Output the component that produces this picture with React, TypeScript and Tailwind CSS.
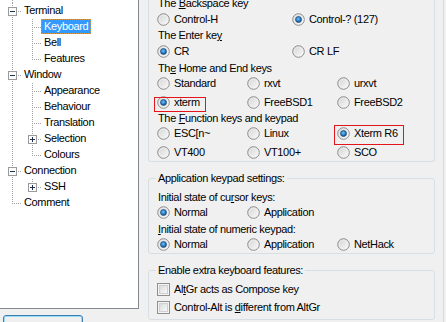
import { useId } from "react";

type Conn = "pipe" | "tee" | "ell";
type Box = "plus" | "minus";

interface TreeRow {
  cells: Array<{ t: Conn; box?: Box }>;
  label: string;
  selected?: boolean;
}

const tree: TreeRow[] = [
  { cells: [{ t: "tee", box: "minus" }], label: "Terminal" },
  { cells: [{ t: "pipe" }, { t: "tee" }], label: "Keyboard", selected: true },
  { cells: [{ t: "pipe" }, { t: "tee" }], label: "Bell" },
  { cells: [{ t: "pipe" }, { t: "ell" }], label: "Features" },
  { cells: [{ t: "tee", box: "minus" }], label: "Window" },
  { cells: [{ t: "pipe" }, { t: "tee" }], label: "Appearance" },
  { cells: [{ t: "pipe" }, { t: "tee" }], label: "Behaviour" },
  { cells: [{ t: "pipe" }, { t: "tee" }], label: "Translation" },
  { cells: [{ t: "pipe" }, { t: "tee", box: "plus" }], label: "Selection" },
  { cells: [{ t: "pipe" }, { t: "ell" }], label: "Colours" },
  { cells: [{ t: "tee", box: "minus" }], label: "Connection" },
  { cells: [{ t: "pipe" }, { t: "ell", box: "plus" }], label: "SSH" },
  { cells: [{ t: "ell" }], label: "Comment" },
];

function Cell({ t, box, h = 16 }: { t: Conn; box?: Box; h?: number }) {
  const dot = { stroke: "#a0a0a0", strokeDasharray: "1 1", shapeRendering: "crispEdges" as const };
  return (
    <svg width="20" height={h} className="shrink-0">
      {(t === "pipe" || t === "tee") && <line x1="10.5" y1="0" x2="10.5" y2={h} {...dot} />}
      {t === "ell" && <line x1="10.5" y1="0" x2="10.5" y2="9" {...dot} />}
      {(t === "tee" || t === "ell") && <line x1="12" y1="8.5" x2="20" y2="8.5" {...dot} />}
      {box && (
        <g shapeRendering="crispEdges">
          <rect x="6.5" y="4.5" width="8" height="8" fill="#fdfdfd" stroke="#9a9a9a" />
          <line x1="8" y1="8.5" x2="13" y2="8.5" stroke="#1f2f4f" />
          {box === "plus" && <line x1="10.5" y1="6" x2="10.5" y2="11" stroke="#1f2f4f" />}
        </g>
      )}
    </svg>
  );
}

function Radio({ checked }: { checked?: boolean }) {
  const id = useId().replace(/:/g, "");
  return (
    <svg width="13" height="13" viewBox="0 0 13 13" className="shrink-0">
      <defs>
        <linearGradient id={`f${id}`} x1="0" y1="0" x2="1" y2="1">
          <stop offset="0" stopColor="#d2d2d2" />
          <stop offset="1" stopColor="#fcfcfc" />
        </linearGradient>
        <radialGradient id={`d${id}`} cx="0.45" cy="0.4" r="0.6">
          <stop offset="0" stopColor="#6cc2f5" />
          <stop offset="0.6" stopColor="#2a7fc8" />
          <stop offset="1" stopColor="#0f426e" />
        </radialGradient>
      </defs>
      <circle cx="6.5" cy="6.5" r="5.8" fill={`url(#f${id})`} stroke="#8d8d8d" strokeWidth="1" />
      <circle cx="6.5" cy="6.5" r="4.3" fill="none" stroke="#f4f4f4" strokeWidth="0.6" />
      {checked && <circle cx="6.5" cy="6.5" r="3" fill={`url(#d${id})`} stroke="#1b4f7e" strokeWidth="0.7" />}
    </svg>
  );
}

function Check() {
  const id = useId().replace(/:/g, "");
  return (
    <svg width="13" height="13" viewBox="0 0 13 13" className="shrink-0" shapeRendering="crispEdges">
      <defs>
        <linearGradient id={`c${id}`} x1="0" y1="0" x2="1" y2="1">
          <stop offset="0" stopColor="#d8d8d8" />
          <stop offset="1" stopColor="#fbfbfb" />
        </linearGradient>
      </defs>
      <rect x="0.5" y="0.5" width="12" height="12" fill="#f4f4f4" stroke="#8e8f8f" />
      <rect x="2.5" y="2.5" width="8" height="8" fill={`url(#c${id})`} stroke="#d0d0d0" />
    </svg>
  );
}

function Opt({ label, checked, mark }: { label: string; checked?: boolean; mark?: "xterm" | "r6" }) {
  return (
    <div className="relative flex items-center gap-[4px] whitespace-nowrap">
      <Radio checked={checked} />
      <span>{label}</span>
      {mark === "xterm" && (
        <div className="absolute left-[-3px] top-[1px] w-[52px] h-[15px] border border-[#e3141b]" />
      )}
      {mark === "r6" && (
        <div className="absolute left-[-3px] top-[-2px] w-[70px] h-[20px] border border-[#e3141b]" />
      )}
    </div>
  );
}

const three = "grid grid-cols-[90px_90px_1fr] h-[16px] items-center pl-[8px]";
const two = "grid grid-cols-[135px_1fr] h-[16px] items-center pl-[8px]";
const caption = "h-[13px] flex items-center ml-[9px] whitespace-nowrap";

export default function App() {
  return (
    <div className="w-[446px] h-[322px] overflow-hidden bg-[#f0f0f0] flex font-['Liberation_Sans',Arial,sans-serif] text-[11px] leading-[13px] tracking-[-0.35px] text-black">
      {/* tree + button */}
      <div className="w-[139px] shrink-0 flex flex-col">
        <div className="h-[309px] shrink-0 bg-white border-r border-b border-[#828790] pl-[2px] flex flex-col overflow-hidden">
          <div className="h-[3px] flex">
            <Cell t="pipe" h={3} />
          </div>
          {tree.map((r) => (
            <div key={r.label} className="flex h-[16px]">
              {r.cells.map((c, i) => (
                <Cell key={i} t={c.t} box={c.box} />
              ))}
              <span
                className={
                  r.selected
                    ? "h-[15px] flex items-center px-[2px] bg-[#3399ff] text-white border border-dotted border-[#d49a4a] -ml-[1px]"
                    : "h-[15px] flex items-center px-[2px] border border-transparent -ml-[1px]"
                }
              >
                {r.label}
              </span>
            </div>
          ))}
        </div>
        <button className="mt-[6px] ml-[3px] w-[80px] h-[23px] shrink-0 rounded-[3px] border border-[#3c7fb1] bg-[linear-gradient(#f2f2f2,#e5e5e5)] shadow-[inset_0_0_0_1px_#98dcf8] text-[11px] flex justify-center pt-[5px]">
          About
        </button>
      </div>

      {/* settings */}
      <div className="ml-[9px] w-[287px] shrink-0 flex flex-col">
        <div className="-mt-[3px] shrink-0 border-x border-b border-[#d5dfe5] rounded-b-[3px] pb-[1px] flex flex-col">
          <div className={caption}>
            The&nbsp;<span className="underline">B</span>ackspace key
          </div>
          <div className={`mt-[1px] ${two}`}>
            <Opt label="Control-H" />
            <Opt label="Control-? (127)" checked />
          </div>
          <div className={`mt-[2px] ${caption}`}>
            The Enter ke<span className="underline">y</span>
          </div>
          <div className={`mt-[1px] ${two}`}>
            <Opt label="CR" checked />
            <Opt label="CR LF" />
          </div>
          <div className={`mt-[3px] ${caption}`}>
            Th<span className="underline">e</span>&nbsp;Home and End keys
          </div>
          <div className={three}>
            <Opt label="Standard" />
            <Opt label="rxvt" />
            <Opt label="urxvt" />
          </div>
          <div className={`mt-[3px] ${three}`}>
            <Opt label="xterm" checked mark="xterm" />
            <Opt label="FreeBSD1" />
            <Opt label="FreeBSD2" />
          </div>
          <div className={`mt-[2px] ${caption}`}>
            The&nbsp;<span className="underline">F</span>unction keys and keypad
          </div>
          <div className={three}>
            <Opt label="ESC[n~" />
            <Opt label="Linux" />
            <Opt label="Xterm R6" checked mark="r6" />
          </div>
          <div className={`mt-[3px] ${three}`}>
            <Opt label="VT400" />
            <Opt label="VT100+" />
            <Opt label="SCO" />
          </div>
        </div>

        <div className="mt-[16px] shrink-0 border border-[#d5dfe5] rounded-[3px] pb-[1px] flex flex-col">
          <div className="-mt-[7px] ml-[7px] w-fit px-[2px] h-[13px] bg-[#f0f0f0] flex items-center">
            Application keypad settings:
          </div>
          <div className={`mt-[6px] ${caption}`}>
            Initial state of cu<span className="underline">r</span>sor keys:
          </div>
          <div className={three}>
            <Opt label="Normal" checked />
            <Opt label="Application" />
          </div>
          <div className={`mt-[3px] ${caption}`}>
            <span className="underline">I</span>nitial state of numeric keypad:
          </div>
          <div className={three}>
            <Opt label="Normal" checked />
            <Opt label="Application" />
            <Opt label="NetHack" />
          </div>
        </div>

        <div className="mt-[16px] shrink-0 border border-[#d5dfe5] rounded-[3px] pb-[4px] flex flex-col">
          <div className="-mt-[7px] ml-[7px] w-fit px-[2px] h-[13px] bg-[#f0f0f0] flex items-center">
            Enable extra keyboard features:
          </div>
          <div className="mt-[4px] h-[16px] flex items-center gap-[4px] pl-[8px]">
            <Check />
            <span>
              Al<span className="underline">t</span>Gr acts as Compose key
            </span>
          </div>
          <div className="mt-[2px] h-[16px] flex items-center gap-[4px] pl-[8px]">
            <Check />
            <span>
              Control-Alt is <span className="underline">d</span>ifferent from AltGr
            </span>
          </div>
        </div>
      </div>

      <div className="ml-[8px] w-[3px] shrink-0 border-l border-[#dadada]" />
    </div>
  );
}
